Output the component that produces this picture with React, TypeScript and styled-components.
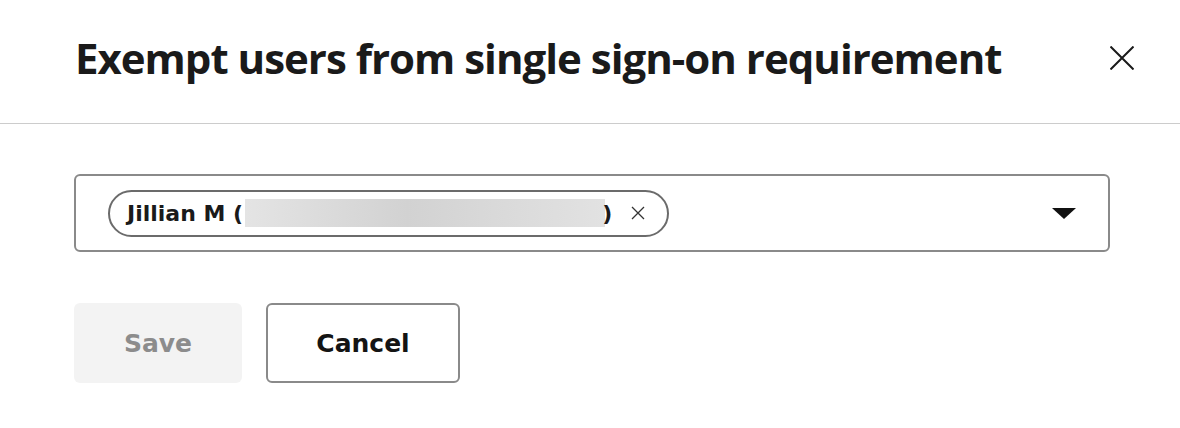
import React from "react";
import styled, { createGlobalStyle } from "styled-components";

const Global = createGlobalStyle`
  html, body { margin: 0; padding: 0; background: #fff; }
  body { font-family: "DejaVu Sans", sans-serif; color: #1a1a1a; }
`;

const Dialog = styled.div`
  width: 1180px;
  height: 428px;
  background: #fff;
  display: flex;
  flex-direction: column;
`;

const Header = styled.div`
  height: 124px;
  box-sizing: border-box;
  border-bottom: 1px solid #cccccc;
  display: flex;
  align-items: center;
  justify-content: space-between;
  padding: 0 46px 8px 75px;
`;

const Title = styled.h1`
  margin: 0;
  font-family: "Open Sans", sans-serif;
  font-weight: 700;
  font-size: 42px;
  letter-spacing: -1px;
  line-height: 1;
  color: #1a1a1a;
`;

const CloseButton = styled.button`
  width: 24px;
  height: 24px;
  border: none;
  background: transparent;
  padding: 0;
  display: flex;
  align-items: center;
  justify-content: center;
  cursor: pointer;
`;

const Body = styled.div`
  padding: 50px 70px 0 74px;
  display: flex;
  flex-direction: column;
  gap: 51px;
`;

const Select = styled.div`
  height: 78px;
  box-sizing: border-box;
  border: 2px solid #8a8a8a;
  border-radius: 6px;
  display: flex;
  align-items: center;
  justify-content: space-between;
  padding: 0 32px 0 32px;
`;

const Chip = styled.div`
  height: 47px;
  box-sizing: border-box;
  border: 2px solid #6b6b6b;
  border-radius: 24px;
  display: flex;
  align-items: center;
  padding: 0 22px 0 17px;
  font-family: "DejaVu Sans", sans-serif;
  font-weight: 700;
  font-size: 22px;
  color: #1a1a1a;
`;

const Redacted = styled.span`
  display: inline-block;
  width: 360px;
  height: 28px;
  margin: 0 -3px 0 2px;
  background: linear-gradient(90deg, #e4e4e4 0%, #d2d2d2 45%, #e2e2e2 100%);
`;

const ChipRemove = styled.span`
  margin-left: 19px;
  display: flex;
  align-items: center;
`;

const Caret = styled.span`
  width: 0;
  height: 0;
  border-left: 12px solid transparent;
  border-right: 12px solid transparent;
  border-top: 11px solid #111;
`;

const Actions = styled.div`
  display: flex;
  gap: 24px;
`;

const Button = styled.button<{ $variant: "disabled" | "secondary" }>`
  height: 80px;
  box-sizing: border-box;
  border-radius: 6px;
  font-family: "DejaVu Sans", sans-serif;
  font-weight: 700;
  font-size: 25px;
  padding: 0;
  background: ${(p) => (p.$variant === "disabled" ? "#f3f3f3" : "#fff")};
  color: ${(p) => (p.$variant === "disabled" ? "#8c8c8c" : "#141414")};
  border: ${(p) => (p.$variant === "disabled" ? "none" : "2px solid #8a8a8a")};
  width: ${(p) => (p.$variant === "disabled" ? "168px" : "194px")};
`;

export default function App() {
  return (
    <>
      <Global />
      <Dialog>
        <Header>
          <Title>Exempt users from single sign-on requirement</Title>
          <CloseButton aria-label="Close">
            <svg width="24" height="24" viewBox="0 0 24 24">
              <path d="M0.5 0.5 L23.5 23.5 M23.5 0.5 L0.5 23.5" stroke="#1a1a1a" strokeWidth="2" />
            </svg>
          </CloseButton>
        </Header>
        <Body>
          <Select>
            <Chip>
              Jillian M (<Redacted />)
              <ChipRemove>
                <svg width="14" height="14" viewBox="0 0 14 14">
                  <path d="M1 1 L13 13 M13 1 L1 13" stroke="#333" strokeWidth="1.3" />
                </svg>
              </ChipRemove>
            </Chip>
            <Caret />
          </Select>
          <Actions>
            <Button $variant="disabled" disabled>Save</Button>
            <Button $variant="secondary">Cancel</Button>
          </Actions>
        </Body>
      </Dialog>
    </>
  );
}
